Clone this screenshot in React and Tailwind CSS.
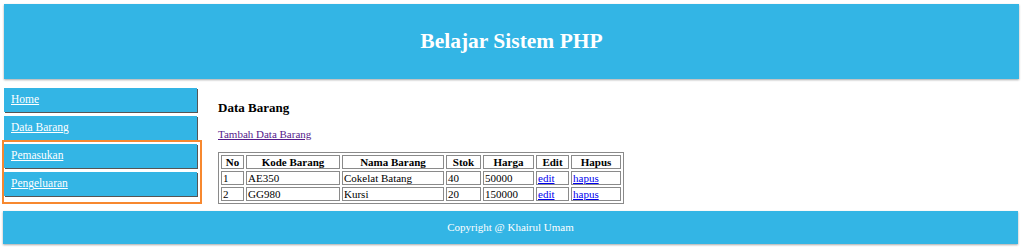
import React from "react";

const menu = ["Home", "Data Barang", "Pemasukan", "Pengeluaran"];
const rows = [
  ["1", "AE350", "Cokelat Batang", "40", "50000"],
  ["2", "GG980", "Kursi", "20", "150000"],
];

export default function App() {
  const th = "border border-[#8a8a8a] px-[1px] h-[14px] leading-[12px] font-bold text-center";
  const td = "border border-[#8a8a8a] px-[1px] h-[14px] leading-[12px] text-left";
  return (
    <div className="relative w-[1024px] h-[251px] bg-white text-[11px] text-black" style={{ fontFamily: '"Liberation Serif", "Times New Roman", serif' }}>
      <div className="pt-[4px] pl-[4px] pr-[5px]">
        <header className="h-[75px] bg-[#33b5e5] flex items-center justify-center shadow-[0_1px_2px_rgba(0,0,0,0.35)]">
          <h1 className="text-white font-bold text-[21.5px] leading-none">Belajar Sistem PHP</h1>
        </header>
        <div className="flex mt-[9px] h-[114px]">
          <nav className="w-[193px] flex flex-col gap-[4px]">
            {menu.map((m) => (
              <div key={m} className="h-[24px] bg-[#33b5e5] flex items-center pl-[7px] shadow-[1px_1px_0_#555]">
                <a href="#" className="text-white underline text-[11.5px]">{m}</a>
              </div>
            ))}
          </nav>
          <main className="pl-[21px] pt-[13px]">
            <h3 className="font-bold text-[13px] leading-none">Data Barang</h3>
            <a href="#" className="block mt-[15px] text-[#551a8b] underline leading-none">Tambah Data Barang</a>
            <table className="mt-[12px] border border-[#8a8a8a] border-separate border-spacing-[2px]">
              <thead>
                <tr>
                  <th className={th + " w-[23px]"}>No</th>
                  <th className={th + " w-[94px]"}>Kode Barang</th>
                  <th className={th + " w-[102px]"}>Nama Barang</th>
                  <th className={th + " w-[35px]"}>Stok</th>
                  <th className={th + " w-[51px]"}>Harga</th>
                  <th className={th + " w-[33px]"}>Edit</th>
                  <th className={th + " w-[50px]"}>Hapus</th>
                </tr>
              </thead>
              <tbody>
                {rows.map((r) => (
                  <tr key={r[0]}>
                    {r.map((c, i) => (
                      <td key={i} className={td}>{c}</td>
                    ))}
                    <td className={td}><a href="#" className="text-[#0000ee] underline">edit</a></td>
                    <td className={td}><a href="#" className="text-[#0000ee] underline">hapus</a></td>
                  </tr>
                ))}
              </tbody>
            </table>
          </main>
        </div>
      </div>
      <footer className="mt-[9px] ml-[3px] w-[1015px] h-[33px] bg-[#33b5e5] flex items-center justify-center shadow-[0_1px_2px_rgba(0,0,0,0.35)]">
        <span className="text-white text-[11px]">Copyright @ Khairul Umam</span>
      </footer>
      <div className="absolute left-[2px] top-[140px] w-[200px] h-[64px] border-2 border-[#f7882f] pointer-events-none" />
    </div>
  );
}
